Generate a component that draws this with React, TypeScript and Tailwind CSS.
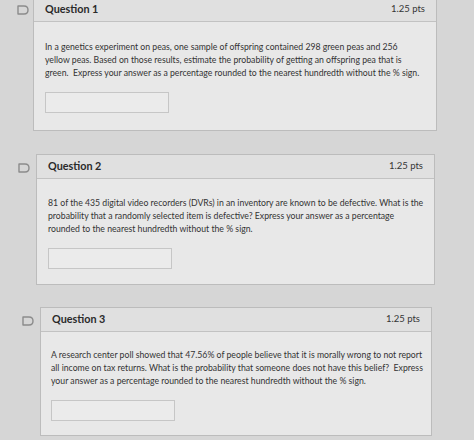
import React from "react";

const Flag = () => (
  <svg width="12" height="10" viewBox="0 0 12 10" fill="none">
    <path d="M1 1 H7 Q11 1 11 5 Q11 9 7 9 H1 Z" stroke="#8c8c8c" strokeWidth="1.4" strokeLinejoin="round" />
  </svg>
);

type Q = {
  title: string;
  lines: string[];
  ml: string;
  w: string;
  mt: string;
  iconMl: string;
  iconMt: string;
  bodyPt: string;
  bodyPl: string;
  bodyPb: string;
};

const qs: Q[] = [
  {
    title: "Question 1",
    lines: [
      "In a genetics experiment on peas, one sample of offspring contained 298 green peas and 256",
      "yellow peas. Based on those results, estimate the probability of getting an offspring pea that is",
      "green.  Express your answer as a percentage rounded to the nearest hundredth without the % sign.",
    ],
    ml: "ml-[33px]",
    w: "w-[404px]",
    mt: "mt-[-3px]",
    iconMl: "ml-[17px]",
    iconMt: "mt-[8px]",
    bodyPt: "pt-[18px]",
    bodyPl: "pl-[11px]",
    bodyPb: "pb-[17px]",
  },
  {
    title: "Question 2",
    lines: [
      "81 of the 435 digital video recorders (DVRs) in an inventory are known to be defective. What is the",
      "probability that a randomly selected item is defective? Express your answer as a percentage",
      "rounded to the nearest hundredth without the % sign.",
    ],
    ml: "ml-[36px]",
    w: "w-[399px]",
    mt: "mt-[23px]",
    iconMl: "ml-[18px]",
    iconMt: "mt-[9px]",
    bodyPt: "pt-[17px]",
    bodyPl: "pl-[11px]",
    bodyPb: "pb-[15px]",
  },
  {
    title: "Question 3",
    lines: [
      "A research center poll showed that 47.56% of people believe that it is morally wrong to not report",
      "all income on tax returns. What is the probability that someone does not have this belief?  Express",
      "your answer as a percentage rounded to the nearest hundredth without the % sign.",
    ],
    ml: "ml-[40px]",
    w: "w-[392px]",
    mt: "mt-[22px]",
    iconMl: "ml-[22px]",
    iconMt: "mt-[9px]",
    bodyPt: "pt-[16px]",
    bodyPl: "pl-[10px]",
    bodyPb: "pb-[14px]",
  },
];

export default function App() {
  return (
    <div
      className="w-[474px] h-[440px] overflow-hidden bg-[#d6d6d6] text-[#353535]"
      style={{ fontFamily: "Lato, 'Open Sans', sans-serif" }}
    >
      {qs.map((q) => (
        <div key={q.title} className={`relative ${q.mt}`}>
          <div className={`absolute left-0 top-0 ${q.iconMl} ${q.iconMt}`}>
            <Flag />
          </div>
          <div className={`${q.ml} ${q.w} border border-[#bcbcbc] bg-[#e8e8e8]`}>
            <div className="h-[24px] flex items-center justify-between px-[11px] bg-[#e0e0e0] border-b border-[#c2c2c2]">
              <span className="text-[10.8px] font-bold text-[#2a2a2a]">{q.title}</span>
              <span className="text-[9.5px] text-[#353535]">1.25 pts</span>
            </div>
            <div className={`${q.bodyPt} ${q.bodyPl} ${q.bodyPb}`}>
              <div className="text-[8.7px] leading-[13px] text-[#333333]">
                {q.lines.map((l, i) => (
                  <div key={i} className="whitespace-pre">{l}</div>
                ))}
              </div>
              <div className="mt-[13px] w-[124px] h-[21px] border border-[#c6c6c6] bg-[#ebebeb]" />
            </div>
          </div>
        </div>
      ))}
    </div>
  );
}
